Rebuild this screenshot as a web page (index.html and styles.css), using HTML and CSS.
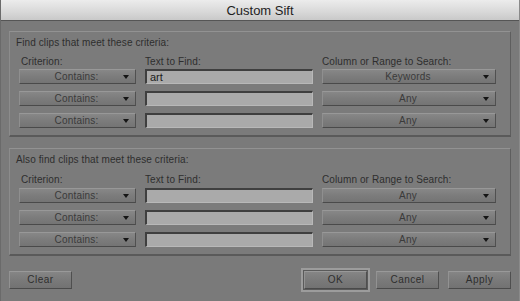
FILE: index.html
```html
<!DOCTYPE html>
<html>
<head>
<meta charset="utf-8">
<link rel="stylesheet" href="styles.css">
</head>
<body>
<div class="window">
  <div class="titlebar">Custom Sift</div>
  <div class="content">
    <div class="panel panel-first">
      <div class="legend">Find clips that meet these criteria:</div>
      <div class="grid heads">
        <div class="hdr hdr-crit">Criterion:</div>
        <div class="hdr">Text to Find:</div>
        <div class="hdr">Column or Range to Search:</div>
      </div>
      <div class="grid rows">
        <div class="dd"><span>Contains:</span><i class="arrow"></i></div>
        <div class="field">art</div>
        <div class="dd"><span>Keywords</span><i class="arrow"></i></div>

        <div class="dd"><span>Contains:</span><i class="arrow"></i></div>
        <div class="field"></div>
        <div class="dd"><span>Any</span><i class="arrow"></i></div>

        <div class="dd"><span>Contains:</span><i class="arrow"></i></div>
        <div class="field"></div>
        <div class="dd"><span>Any</span><i class="arrow"></i></div>
      </div>
    </div>
    <div class="panel panel-second">
      <div class="legend">Also find clips that meet these criteria:</div>
      <div class="grid heads">
        <div class="hdr hdr-crit">Criterion:</div>
        <div class="hdr">Text to Find:</div>
        <div class="hdr">Column or Range to Search:</div>
      </div>
      <div class="grid rows">
        <div class="dd"><span>Contains:</span><i class="arrow"></i></div>
        <div class="field"></div>
        <div class="dd"><span>Any</span><i class="arrow"></i></div>

        <div class="dd"><span>Contains:</span><i class="arrow"></i></div>
        <div class="field"></div>
        <div class="dd"><span>Any</span><i class="arrow"></i></div>

        <div class="dd"><span>Contains:</span><i class="arrow"></i></div>
        <div class="field"></div>
        <div class="dd"><span>Any</span><i class="arrow"></i></div>
      </div>
    </div>
    <div class="footer">
      <div class="btn">Clear</div>
      <div class="spacer"></div>
      <div class="btn btn-default">OK</div>
      <div class="btn">Cancel</div>
      <div class="btn">Apply</div>
    </div>
  </div>
</div>
</body>
</html>
```

FILE: styles.css
```css
html, body {
  margin: 0;
  padding: 0;
  background: #7a7a7a;
}

.window {
  width: 520px;
  height: 301px;
  box-sizing: border-box;
  background: #7a7a7a;
  border-left: 1px solid #6a6a6a;
  border-right: 1px solid #8a8a8a;
  font-family: "Liberation Sans", Arial, sans-serif;
  font-size: 10px;
  color: #2a2a2a;
  overflow: hidden;
}

.titlebar {
  height: 20px;
  line-height: 21px;
  text-align: center;
  font-size: 13px;
  color: #1e1e1e;
  background: linear-gradient(#ececec, #d8d8d8 60%, #c9c9c9);
  border-bottom: 1px solid #555;
}

.content {
  padding: 10px 8px 0 8px;
}

.panel {
  border-top: 1px solid #929292;
  border-left: 1px solid #8c8c8c;
  border-right: 1px solid #5e5e5e;
  border-bottom: 2px solid #5a5a5a;
  background: #7b7b7b;
  padding: 5px 13px 7px 9px;
}

.panel-second {
  margin-top: 11px;
  padding-top: 5px;
}

.legend {
  height: 12px;
  line-height: 12px;
  margin-left: -3px;
  letter-spacing: 0.1px;
  color: #2e2e2e;
}

.grid {
  display: grid;
  grid-template-columns: 117px 168px 174px;
  column-gap: 9px;
}

.heads {
  margin-top: 7px;
  height: 12px;
}

.panel-second .heads {
  margin-top: 8px;
}

.rows {
  margin-top: 1px;
  row-gap: 7px;
  grid-auto-rows: 15px;
}

.panel-second .rows {
  margin-top: 2px;
}

.hdr {
  height: 12px;
  line-height: 12px;
  color: #2e2e2e;
  letter-spacing: 0.1px;
}

.hdr-crit {
  padding-left: 2px;
}

.dd {
  position: relative;
  box-sizing: border-box;
  height: 15px;
  line-height: 13px;
  text-align: center;
  color: #3a3a3a;
  background: linear-gradient(#878787, #7c7c7c 50%, #747474);
  border-top: 1px solid #989898;
  border-left: 1px solid #8f8f8f;
  border-right: 1px solid #505050;
  border-bottom: 1px solid #4a4a4a;
}

.dd span {
  display: block;
  padding-right: 2px;
  letter-spacing: 0.2px;
}

.arrow {
  position: absolute;
  right: 6px;
  top: 5px;
  width: 0;
  height: 0;
  border-left: 3px solid transparent;
  border-right: 3px solid transparent;
  border-top: 4px solid #151515;
}

.field {
  box-sizing: border-box;
  height: 15px;
  line-height: 12px;
  padding-left: 3px;
  color: #1c1c1c;
  font-size: 11px;
  background: #aaaaaa;
  border-top: 2px solid #3f3f3f;
  border-left: 2px solid #3f3f3f;
  border-right: 1px solid #b8b8b8;
  border-bottom: 1px solid #b8b8b8;
}

.footer {
  display: flex;
  align-items: center;
  gap: 9px;
  margin-top: 15px;
}

.spacer {
  flex: 1;
}

.btn {
  box-sizing: border-box;
  width: 63px;
  height: 18px;
  line-height: 16px;
  text-align: center;
  color: #2e2e2e;
  letter-spacing: 0.5px;
  background: linear-gradient(#858585, #7a7a7a 50%, #727272);
  border-top: 1px solid #999;
  border-left: 1px solid #929292;
  border-right: 1px solid #4f4f4f;
  border-bottom: 1px solid #4a4a4a;
}

.btn-default {
  box-shadow: 0 0 0 1px #5a5a5a, 0 0 0 3px #9c9c9c;
}
```
